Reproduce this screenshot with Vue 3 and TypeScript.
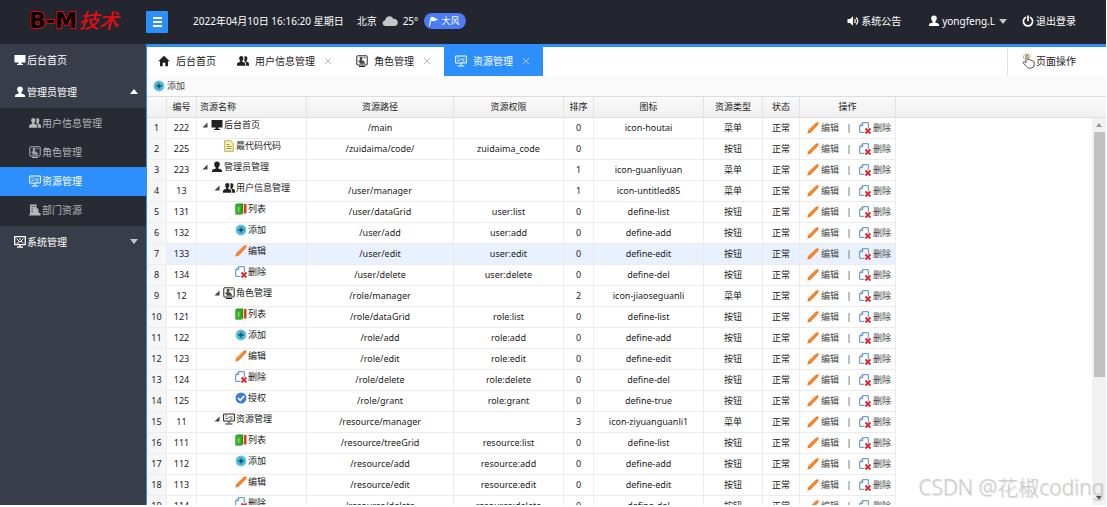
<script setup lang="ts">
import { ref } from 'vue'

interface Tab {
  title: string
  icon: string
  closable: boolean
}

interface Resource {
  id: number
  name: string
  icon: string
  level: number
  parent: boolean
  path: string
  perm: string
  sort: number
  iconName: string
}

const tabs: Tab[] = [
  { title: '后台首页', icon: 'home', closable: false },
  { title: '用户信息管理', icon: 'users', closable: true },
  { title: '角色管理', icon: 'role', closable: true },
  { title: '资源管理', icon: 'resource', closable: true },
]
const activeTab = ref('资源管理')

const subMenu = [
  { title: '用户信息管理', icon: 'users' },
  { title: '角色管理', icon: 'role' },
  { title: '资源管理', icon: 'resource' },
  { title: '部门资源', icon: 'dept' },
]

const columns = ['', '编号', '资源名称', '资源路径', '资源权限', '排序', '图标', '资源类型', '状态', '操作']

function node(id: number, name: string, icon: string, level: number, path: string, sort: number, iconName: string): Resource {
  return { id, name, icon, level, parent: true, path, perm: '', sort, iconName }
}
function leaf(id: number, name: string, icon: string, level: number, path: string, perm: string, iconName: string): Resource {
  return { id, name, icon, level, parent: false, path, perm, sort: 0, iconName }
}

const rows: Resource[] = [
  node(222, '后台首页', 'monitor', 0, '/main', 0, 'icon-houtai'),
  leaf(225, '最代码代码', 'note', 1, '/zuidaima/code/', 'zuidaima_code', ''),
  node(223, '管理员管理', 'admin', 0, '', 1, 'icon-guanliyuan'),
  node(13, '用户信息管理', 'users', 1, '/user/manager', 1, 'icon-untitled85'),
  leaf(131, '列表', 'list', 2, '/user/dataGrid', 'user:list', 'define-list'),
  leaf(132, '添加', 'add', 2, '/user/add', 'user:add', 'define-add'),
  leaf(133, '编辑', 'edit', 2, '/user/edit', 'user:edit', 'define-edit'),
  leaf(134, '删除', 'del', 2, '/user/delete', 'user:delete', 'define-del'),
  node(12, '角色管理', 'role', 1, '/role/manager', 2, 'icon-jiaoseguanli'),
  leaf(121, '列表', 'list', 2, '/role/dataGrid', 'role:list', 'define-list'),
  leaf(122, '添加', 'add', 2, '/role/add', 'role:add', 'define-add'),
  leaf(123, '编辑', 'edit', 2, '/role/edit', 'role:edit', 'define-edit'),
  leaf(124, '删除', 'del', 2, '/role/delete', 'role:delete', 'define-del'),
  leaf(125, '授权', 'grant', 2, '/role/grant', 'role:grant', 'define-true'),
  node(11, '资源管理', 'resource', 1, '/resource/manager', 3, 'icon-ziyuanguanli1'),
  leaf(111, '列表', 'list', 2, '/resource/treeGrid', 'resource:list', 'define-list'),
  leaf(112, '添加', 'add', 2, '/resource/add', 'resource:add', 'define-add'),
  leaf(113, '编辑', 'edit', 2, '/resource/edit', 'resource:edit', 'define-edit'),
  leaf(114, '删除', 'del', 2, '/resource/delete', 'resource:delete', 'define-del'),
]
const selected = ref(133)
</script>

<template>
  <div class="page">
    <svg class="defs" aria-hidden="true">
      <symbol id="monitor" viewBox="0 0 12 12"><path fill="currentColor" d="M.5 1h11v7.500h-11zM4.500 8.500h3v1.500h1.500v1h-6v-1h1.500z" /></symbol>
      <symbol id="admin" viewBox="0 0 12 12"><path fill="currentColor" d="M6 .5c1.900 0 2.900 1.300 2.800 2.900C8.700 5 8 5.700 7.300 6.600v.9c2 .5 3.700 1 3.700 2.200V11H1V9.700c0-1.200 1.700-1.700 3.700-2.200v-.9C4 5.700 3.300 5 3.200 3.400 3.100 1.800 4.100.5 6 .5z" /></symbol>
      <symbol id="users" viewBox="0 0 12 12"><path fill="currentColor" d="M4.300 1c1.500 0 2.200 1 2.100 2.300C6.300 4.600 5.900 5.200 5.300 5.800v.9C7.300 7.200 8.300 8 8.300 9v1.800H0V9c0-1 1.200-1.800 3.200-2.300v-.9C2.600 5.200 2.200 4.600 2.200 3.300 2.100 2 2.800 1 4.300 1zM8.500 1.300c1.300 0 2 .9 1.900 2.100-.1 1.200-.5 1.800-1.100 2.300v.8c1.700.5 2.700 1.200 2.700 2.300v2H9.100V9c0-1.100-.6-1.800-1.500-2.400v-.8L7 5.300c.4-.5.6-1.200.6-2 0-.6-.1-1.200-.4-1.700.3-.2.8-.3 1.300-.3z" /></symbol>
      <symbol id="role" viewBox="0 0 12 12"><path fill="none" stroke="currentColor" d="M1.500.8h9q.7 0 .7.7v7.800q0 .7-.7.700h-9q-.7 0-.7-.7V1.500q0-.7.7-.7zM3 11.500h6" /><path fill="currentColor" d="M3.800 2h2.600v2.300H5.800v1.200h1.700l1.700 2.700v.6H3.500V7h-1V5.500h1.300zM7.500 2.200h2v1h-2z" opacity=".85" /></symbol>
      <symbol id="resource" viewBox="0 0 12 12"><path fill="none" stroke="currentColor" d="M.6 1h10.800v7H.6zM6 8v2.500M2.500 11h7" /><path fill="none" stroke="currentColor" stroke-width=".8" d="M2.300 3h2M2.300 5.500h2.400L6.200 4h3.500M7 6h2.500" /></symbol>
      <symbol id="dept" viewBox="0 0 12 12"><path fill="currentColor" fill-rule="evenodd" d="M1 .5h6.500v3.600c1.700.2 2.600 1.500 2 3.200l-.5.700 2.500 1.300v2.200H0v-1h1zM2.500 2v1h1.300V2zm2.300 0v1h1.300V2zM2.500 4.500v1h1.300v-1zm0 2.500v1h1.300V7z" /></symbol>
      <symbol id="system" viewBox="0 0 12 12"><path fill="none" stroke="currentColor" stroke-width="1.300" d="M.7.7h10.600v8H.7zM3 11.200h6M6 9v2" /><path fill="none" stroke="currentColor" d="M2.500 2.500l2.500 2.500M9.500 2.500L6 6 4 4.500M7 5l2.300 2.300M2.700 7h2.500M6 2v2" /></symbol>
      <symbol id="home" viewBox="0 0 12 12"><path fill="currentColor" d="M6 .7l5.800 5.600H10v5H7.300V7.800H4.700v3.500H2v-5H.2z" /></symbol>
      <symbol id="sound" viewBox="0 0 12 12"><path fill="currentColor" d="M.5 4H3l3-2.700v9.400L3 8H.5z" /><path fill="none" stroke="currentColor" stroke-width="1.200" d="M7.500 4q1.500 2 0 4M9 2.500q3.500 3.500 0 7" /></symbol>
      <symbol id="power" viewBox="0 0 12 12"><path fill="none" stroke="currentColor" stroke-width="1.700" stroke-linecap="round" d="M3.500 2.500a4.600 4.600 0 1 0 5 0M6 1v4.500" /></symbol>
      <symbol id="cloud" viewBox="0 0 16 12"><path fill="#c5c6c9" d="M4 11C-.3 11-.4 6 3 5.600 3.300 1 9.500-.5 11.200 3.800c5.600-.3 6.200 7.200 1.300 7.200z" /></symbol>
      <symbol id="flag" viewBox="0 0 12 12"><path fill="none" stroke="#fff" stroke-width="1.200" d="M3.500 1.500L1.500 11" /><path fill="#fff" d="M3.500 1C6 .3 7 3 11 3.200 9 5.500 6 6 3 5.200z" /></symbol>
      <symbol id="hand" viewBox="0 0 14 16"><path fill="#fff" stroke="#555" d="M5 10V3.500q0-1.200 1-1.200t1 1.200v3.700q0-1 1.200-.9 1 0 1.100 1 1.600-.7 2 .7 1.700-.3 1.900 1.100v2.800q0 3-3.200 3.300H8.200q-1.500 0-2.600-1.600L2.200 9.800q0-1.300 1.200-1.200z" /><path fill="none" stroke="#d9a441" d="M3.200 6q-1.700-2.500.2-4.300Q6-.1 8.500 1.800q1 1.500.4 3" /></symbol>
      <symbol id="add" viewBox="0 0 12 12"><circle cx="6" cy="6" r="5.400" fill="#5cc4e6" /><circle cx="6" cy="6" r="4" fill="#35a5cf" opacity=".45" /><path stroke="#17485f" stroke-width="1.300" d="M6 3.500v5M3.500 6h5" /></symbol>
      <symbol id="edit" viewBox="0 0 12 12"><path fill="#f5791f" d="M.3 11.700L1.300 8 8.500 1.200Q10.300-.1 11.500.6q.4 1.500-1 3L3.800 10.500z" /><path fill="#fb923c" d="M2 8.600L9 2l.6.600L3 9.300z" /></symbol>
      <symbol id="del" viewBox="0 0 12 12"><path fill="#fff" stroke="#4d8ccc" d="M3.700.7h5.600v5.500M5.500 10.300H.7V3.700L3.700.7v3H.9" /><path stroke="#e3202c" stroke-width="1.900" d="M6.500 6.500l5 5M11.500 6.500l-5 5" /></symbol>
      <symbol id="list" viewBox="0 0 12 12"><path fill="#1d9428" d="M.5 1.500L2 .5h6v9.700l-1.500 1.300h-6z" /><path fill="#3aae2c" d="M.5 1.800h6v9.500h-6z" /><path fill="#8ed66a" d="M2.900 4.200h1.500v4.500H2.900z" /><path fill="#d93a22" d="M9 1h2.500v9.500H9z" /><path fill="#f6c04e" d="M8.300 1h.8v9.500h-.8z" /></symbol>
      <symbol id="note" viewBox="0 0 12 12"><path fill="#f7f3a8" stroke="#b3aa62" d="M1.700.7h5.800l2.800 2.800v7.800H1.700z" /><path stroke="#9c975a" d="M3.500 4.500h3M3.500 6.500h5M3.500 8.500h5" /></symbol>
      <symbol id="grant" viewBox="0 0 12 12"><circle cx="6" cy="6" r="5.500" fill="#3d7fd6" /><path fill="none" stroke="#fff" stroke-width="1.700" d="M3 6l2.300 2.300L9.200 4" /></symbol>
      <symbol id="cross" viewBox="0 0 8 8"><path stroke="currentColor" d="M1 1l6 6M7 1L1 7" /></symbol>
      <symbol id="expanded" viewBox="0 0 6 6"><path fill="#444" d="M5.500.5v5h-5z" /></symbol>
    </svg>

    <header class="topbar">
      <a class="logo" href="#"><span class="logo-en">B-M</span><span class="logo-cn">技术</span></a>
      <button class="menu-toggle" type="button" aria-label="菜单"><i></i><i></i><i></i></button>
      <time class="clock">2022年04月10日 16:16:20 星期日</time>
      <div class="weather">
        <span>北京</span>
        <svg class="cloud"><use href="#cloud" /></svg>
        <span class="temp">25°</span>
        <span class="wind"><svg><use href="#flag" /></svg>大风</span>
      </div>
      <nav class="user-nav">
        <a href="#"><svg class="icon"><use href="#sound" /></svg>系统公告</a>
        <a href="#"><svg class="icon"><use href="#admin" /></svg>yongfeng.L<i class="caret down"></i></a>
        <a href="#"><svg class="icon"><use href="#power" /></svg>退出登录</a>
      </nav>
    </header>

    <div class="body">
      <nav class="sidebar">
        <a class="item" href="#"><svg class="icon"><use href="#monitor" /></svg>后台首页</a>
        <a class="item" href="#"><svg class="icon"><use href="#admin" /></svg>管理员管理<i class="caret up"></i></a>
        <div class="submenu">
          <a v-for="m in subMenu" :key="m.title" href="#" :class="{ active: m.title === activeTab }">
            <svg class="icon"><use :href="'#' + m.icon" /></svg>{{ m.title }}
          </a>
        </div>
        <a class="item" href="#"><svg class="icon"><use href="#system" /></svg>系统管理<i class="caret down"></i></a>
      </nav>

      <main class="main">
        <div class="tabs">
          <div v-for="t in tabs" :key="t.title" class="tab" :class="{ active: t.title === activeTab, fixed: !t.closable }">
            <button class="tab-title" type="button" @click="activeTab = t.title">
              <svg class="icon"><use :href="'#' + t.icon" /></svg>{{ t.title }}
            </button>
            <button v-if="t.closable" class="close" type="button" :aria-label="'关闭' + t.title"><svg><use href="#cross" /></svg></button>
          </div>
          <button class="page-ops" type="button"><svg><use href="#hand" /></svg>页面操作</button>
        </div>

        <div class="toolbar">
          <button type="button"><svg class="small"><use href="#add" /></svg>添加</button>
        </div>

        <div class="grid">
          <table>
            <colgroup>
              <col class="w-row"><col class="w-id"><col class="w-name"><col class="w-path"><col class="w-perm">
              <col class="w-id"><col class="w-perm"><col class="w-type"><col class="w-state"><col class="w-ops"><col>
            </colgroup>
            <thead>
              <tr>
                <th v-for="(c, i) in columns" :key="i" :class="{ left: i === 2 }">{{ c }}</th>
                <th class="filler"></th>
              </tr>
            </thead>
            <tbody>
              <tr v-for="(r, i) in rows" :key="r.id" :class="{ selected: r.id === selected }" @click="selected = r.id">
                <td class="rownum">{{ i + 1 }}</td>
                <td>{{ r.id }}</td>
                <td class="name">
                  <div class="tree">
                    <span v-for="n in r.level" :key="n" class="indent"></span>
                    <button v-if="r.parent" class="indent" type="button" aria-label="折叠"><svg><use href="#expanded" /></svg></button>
                    <span v-else class="indent"></span>
                    <svg class="small"><use :href="'#' + r.icon" /></svg><span>{{ r.name }}</span>
                  </div>
                </td>
                <td>{{ r.path }}</td>
                <td>{{ r.perm }}</td>
                <td>{{ r.sort }}</td>
                <td>{{ r.iconName }}</td>
                <td>{{ r.parent ? '菜单' : '按钮' }}</td>
                <td>正常</td>
                <td>
                  <div class="ops">
                    <a href="#"><svg class="small"><use href="#edit" /></svg>编辑</a>
                    <span>|</span>
                    <a href="#"><svg class="small"><use href="#del" /></svg>删除</a>
                  </div>
                </td>
                <td class="filler"></td>
              </tr>
            </tbody>
          </table>
          <div class="scrollbar" aria-hidden="true">
            <i class="arrow up"></i>
            <div class="thumb"></div>
            <i class="arrow down"></i>
          </div>
        </div>
      </main>
    </div>
    <div class="watermark">CSDN @花椒coding</div>
  </div>
</template>

<style>
body {
  margin: 0;
  background: #fff;
}
</style>

<style scoped>
.page {
  position: relative;
  box-sizing: border-box;
  height: 100vh;
  padding: 0 1px 2px 0;
  display: flex;
  flex-direction: column;
  overflow: hidden;
  background: #fff;
  font: 10px/16px 'Noto Sans', 'Noto Sans CJK SC', sans-serif;
  color: #222;
}
.page * {
  box-sizing: border-box;
}
.defs {
  position: absolute;
  width: 0;
  height: 0;
}
a {
  color: inherit;
  text-decoration: none;
}
button {
  padding: 0;
  border: 0;
  background: none;
  color: inherit;
  font: inherit;
  cursor: pointer;
}
svg {
  flex: none;
}
.icon {
  width: 12px;
  height: 12px;
}
.small {
  width: 12px;
  height: 12px;
}

.topbar {
  flex: none;
  height: 44px;
  padding-bottom: 2px;
  display: flex;
  align-items: center;
  background: #23262e;
  color: #fff;
  white-space: nowrap;
}
.logo {
  width: 146px;
  padding-left: 29px;
  display: flex;
  align-items: center;
  line-height: 28px;
}
.logo-en {
  color: #000;
  font-family: 'DejaVu Sans', sans-serif;
  font-weight: bold;
  font-size: 22px;
  -webkit-text-stroke: 2px #d00a12;
  paint-order: stroke fill;
}
.logo-cn {
  margin-left: 2px;
  color: #e60a14;
  font-size: 20px;
  font-weight: 500;
  font-style: italic;
}
.menu-toggle {
  width: 22px;
  height: 22px;
  margin-top: 2px;
  display: flex;
  flex-direction: column;
  align-items: center;
  justify-content: center;
  gap: 2px;
  border-radius: 1px;
  background: #2d8ffb;
}
.menu-toggle i {
  width: 9px;
  height: 2px;
  background: #fff;
}
.clock {
  margin-left: 25px;
}
.weather {
  margin-left: 13px;
  display: flex;
  align-items: center;
}
.cloud {
  width: 16px;
  height: 12px;
  margin: 0 5px;
}
.wind {
  height: 16px;
  margin-left: 6px;
  padding: 0 7px 0 4px;
  display: flex;
  align-items: center;
  gap: 2px;
  border-radius: 8px;
  background: #4a7cf6;
  font-size: 9px;
}
.wind svg {
  width: 11px;
  height: 11px;
}
.user-nav {
  margin-left: auto;
  padding-right: 30px;
  display: flex;
}
.user-nav a {
  display: flex;
  align-items: center;
  gap: 2px;
}
.user-nav a + a {
  margin-left: 27px;
}
.user-nav a:last-child {
  margin-left: 15px;
}
.caret {
  border: 4px solid transparent;
}
.caret.down {
  border-top: 5px solid #c4c6ca;
  border-bottom: 0;
}
.caret.up {
  border-bottom: 5px solid #fff;
  border-top: 0;
}
.user-nav .caret {
  margin-left: 2px;
}

.body {
  flex: 1;
  min-height: 0;
  display: flex;
}
.sidebar {
  flex: none;
  width: 146px;
  background: #393d49;
  color: #fff;
}
.sidebar a {
  padding-bottom: 2px;
  display: flex;
  align-items: center;
  gap: 1px;
}
.sidebar .item {
  height: 32px;
  padding: 0 8px 1px 14px;
}
.item .caret {
  margin-left: auto;
}
.submenu {
  padding: 1px 0;
  background: #282b33;
  color: #b4b6ba;
}
.submenu a {
  height: 29px;
  padding-left: 29px;
}
.submenu a.active {
  background: #2d8ffb;
  color: #fff;
}

.main {
  flex: 1;
  min-width: 0;
  display: flex;
  flex-direction: column;
  border-top: 3px solid #2d8ffb;
  border-left: 1px solid #2d8ffb;
}
.tabs {
  flex: none;
  height: 29px;
  display: flex;
}
.tab {
  padding: 0 13px 2px 11px;
  display: flex;
  align-items: center;
  gap: 9px;
}
.tab.fixed {
  padding-right: 10px;
}
.tab.active {
  background: #2d8ffb;
  color: #fff;
}
.tab-title {
  display: flex;
  align-items: center;
  gap: 6px;
}
.close {
  display: flex;
  color: #bbb;
}
.active .close {
  color: #a9c8ee;
}
.close svg {
  width: 8px;
  height: 8px;
}
.page-ops {
  width: 99px;
  margin-left: auto;
  padding: 0 0 2px 13px;
  display: flex;
  align-items: center;
  gap: 1px;
  border-left: 1px solid #e2e2e2;
}
.page-ops svg {
  width: 14px;
  height: 16px;
}
.toolbar {
  flex: none;
  height: 20px;
  padding-left: 6px;
  display: flex;
  align-items: center;
  background: #fafafa;
  color: #444;
  font-size: 9px;
}
.toolbar button {
  display: flex;
  align-items: center;
  gap: 2px;
}

.grid {
  position: relative;
  flex: 1;
  min-height: 0;
  overflow: hidden;
  border-top: 1px solid #ddd;
  font-size: 9px;
  line-height: 14px;
}
table {
  width: 100%;
  table-layout: fixed;
  border-spacing: 0;
}
.w-row { width: 20px; }
.w-id { width: 30px; }
.w-name { width: 110px; }
.w-path { width: 147px; }
.w-perm { width: 110px; }
.w-type { width: 59px; }
.w-state { width: 37px; }
.w-ops { width: 96px; }
th,
td {
  height: 21px;
  padding: 0;
  border-right: 1px solid #ececec;
  border-bottom: 1px solid #ececec;
  text-align: center;
  white-space: nowrap;
  overflow: hidden;
}
th {
  border-right-color: #e4e4e4;
  border-bottom-color: #ddd;
  background: linear-gradient(#fafafa, #f0f0f0);
  font-weight: normal;
}
th.left {
  padding-left: 3px;
  text-align: left;
}
.filler {
  border-right: 0;
}
td.filler {
  border-bottom: 0;
}
.rownum {
  background: #f6f6f6;
}
.selected td:not(.rownum, .filler) {
  background: #e9f1fe;
}
.name {
  padding: 0 0 6px 2px;
  color: #222;
}
.tree {
  display: flex;
  align-items: center;
}
.tree > span:last-child {
  margin-left: 1px;
}
.indent {
  width: 12px;
  flex: none;
}
button.indent {
  display: flex;
  justify-content: center;
}
.indent svg {
  width: 6px;
  height: 6px;
}
.ops {
  padding: 0 4px 0 7px;
  display: flex;
  justify-content: space-between;
  color: #444;
}
.ops a {
  display: flex;
  align-items: center;
  gap: 2px;
}

.scrollbar {
  position: absolute;
  top: 21px;
  right: 0;
  bottom: 0;
  width: 14px;
  padding: 5px 1px;
  display: flex;
  flex-direction: column;
  align-items: center;
  background: #f1f1f1;
}
.thumb {
  width: 11px;
  height: 65%;
  margin: 5px 0 auto;
  background: #c1c1c1;
}
.arrow {
  border: 3px solid transparent;
}
.arrow.up {
  border-top: 0;
  border-bottom: 4px solid #999;
}
.arrow.down {
  border-bottom: 0;
  border-top: 4px solid #505050;
}

.watermark {
  position: absolute;
  right: 3px;
  bottom: 7px;
  font-size: 21px;
  line-height: 26px;
  font-weight: 300;
  color: rgba(195, 195, 195, 0.8);
  text-shadow: 1px 1px 1px rgba(140, 140, 140, 0.3);
  pointer-events: none;
}
</style>
